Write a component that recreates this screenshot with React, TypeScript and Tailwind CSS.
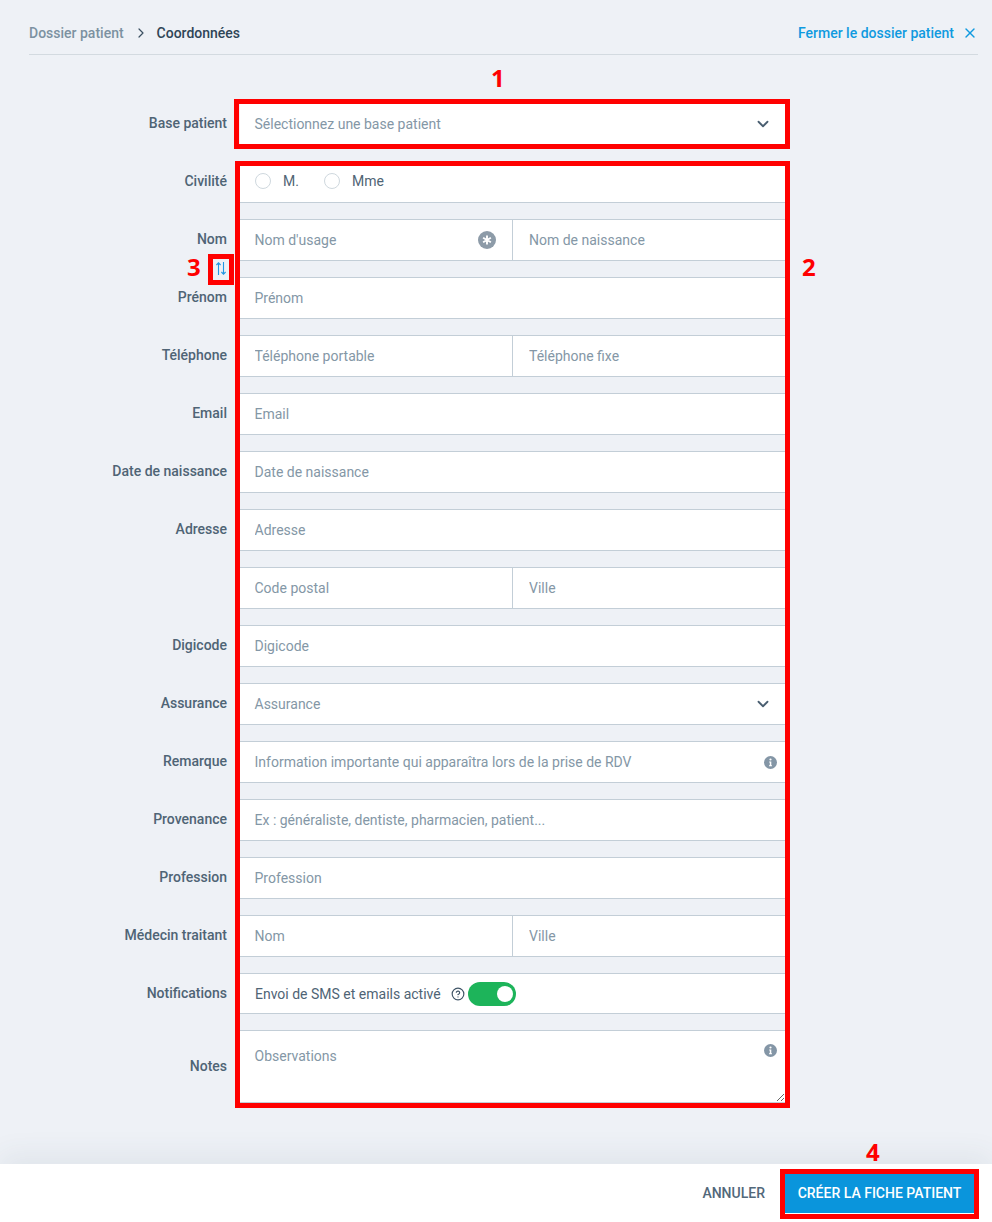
import type { ReactNode } from "react";
import { ChevronDown, ChevronRight, CircleHelp, X } from "lucide-react";

function InfoIcon({ className }: { className: string }) {
  return (
    <svg viewBox="0 0 13 13" className={className}>
      <circle cx="6.5" cy="6.5" r="6.5" fill="#8496a6" />
      <circle cx="6.5" cy="3.5" r="1.1" fill="#fff" />
      <path d="M5.2 5.6h2.1v3.6h.7v1H5v-1h.8V6.6h-.6z" fill="#fff" />
    </svg>
  );
}

function RequiredIcon() {
  return (
    <svg viewBox="0 0 18 18" className="h-[18px] w-[18px] shrink-0">
      <circle cx="9" cy="9" r="9" fill="#8d9ba8" />
      <path d="M9 4.5v9M5.1 6.75l7.8 4.5M12.9 6.75l-7.8 4.5" stroke="#fff" strokeWidth="1.9" />
    </svg>
  );
}

function SwapIcon() {
  return (
    <svg viewBox="0 0 10 13" fill="none" stroke="#2196e3" strokeWidth="1.1" className="h-[13px] w-[10px]">
      <path d="M2.5 13V.8M.4 3 2.5.8 4.6 3M7.5 0v12.2M5.4 10l2.1 2.2L9.6 10" />
    </svg>
  );
}

function Field({ placeholder }: { placeholder: string }) {
  return (
    <input
      placeholder={placeholder}
      className="h-full w-full min-w-0 bg-transparent pl-[14.5px] text-sm outline-none placeholder:text-[#8497a6]"
    />
  );
}

function Label({ children }: { children?: ReactNode }) {
  return <div className="mr-[13px] w-[227px] pb-[2px] text-right text-sm font-medium text-[#4f6475]">{children}</div>;
}

function Row({ label, children, short }: { label?: string; children: ReactNode; short?: boolean }) {
  return (
    <div className="flex items-center">
      <Label>{label}</Label>
      <div className={`flex w-[545px] items-center border-y border-[#c3ced7] bg-white ${short ? "h-[41px]" : "h-[42px]"}`}>
        {children}
      </div>
    </div>
  );
}

function SplitRow({ label, left, right, icon }: { label?: string; left: string; right: string; icon?: ReactNode }) {
  return (
    <Row label={label}>
      <div className="flex h-full w-[272px] items-center pr-[16px]">
        <Field placeholder={left} />
        {icon}
      </div>
      <div className="h-full flex-1 border-l border-[#c3ced7] pl-[1.5px]">
        <Field placeholder={right} />
      </div>
    </Row>
  );
}

function SelectRow({ label, placeholder }: { label: string; placeholder: string }) {
  return (
    <Row label={label}>
      <span className="flex-1 pl-[14.5px] text-sm text-[#8497a6]">{placeholder}</span>
      <ChevronDown size={18} strokeWidth={2.4} className="mr-[13px] text-[#4a5f71]" />
    </Row>
  );
}

function Radio({ label }: { label: string }) {
  return (
    <label className="flex items-center gap-[12px] text-sm text-[#4f6475]">
      <span className="h-4 w-4 rounded-full border border-[#cfd8de] bg-white" />
      {label}
    </label>
  );
}

// red annotation frames and numbers drawn over the form
function Frame({ className }: { className: string }) {
  return <div className={`pointer-events-none absolute border-[5px] border-[#ff0000] ${className}`} />;
}

function Mark({ className, children }: { className: string; children: ReactNode }) {
  return (
    <span className={`absolute font-['Open_Sans',sans-serif] text-2xl leading-none font-bold text-[#ff0000] ${className}`}>
      {children}
    </span>
  );
}

export default function App() {
  return (
    <div className="relative flex h-[1222px] flex-col overflow-hidden bg-[#eef1f6] font-['Roboto',sans-serif]">
      {/* Header */}
      <header className="mx-[29px] flex h-[55px] w-[949px] items-center justify-between border-b border-[#d3dae0] pt-[11px] text-sm font-medium">
        <div className="flex items-center">
          <span className="text-[#7c91a1]">Dossier patient</span>
          <ChevronRight size={16} strokeWidth={1.8} className="mr-[8px] ml-[9px] text-[#3c5062]" />
          <span className="text-[#2f4557]">Coordonnées</span>
        </div>
        <div className="flex items-center text-[#0f9ae0]">
          <span>Fermer le dossier patient</span>
          <X size={16} strokeWidth={2} className="mr-0 ml-[8px]" />
        </div>
      </header>

      {/* Form */}
      <main className="mt-[48px] flex flex-1 flex-col gap-4">
        <SelectRow label="Base patient" placeholder="Sélectionnez une base patient" />
        <Row label="Civilité">
          <div className="flex items-center gap-[25px] pb-[2px] pl-[15px]">
            <Radio label="M." />
            <Radio label="Mme" />
          </div>
        </Row>
        <SplitRow label="Nom" left="Nom d'usage" right="Nom de naissance" icon={<RequiredIcon />} />
        <Row label="Prénom"><Field placeholder="Prénom" /></Row>
        <SplitRow label="Téléphone" left="Téléphone portable" right="Téléphone fixe" />
        <Row label="Email"><Field placeholder="Email" /></Row>
        <Row label="Date de naissance"><Field placeholder="Date de naissance" /></Row>
        <Row label="Adresse"><Field placeholder="Adresse" /></Row>
        <SplitRow left="Code postal" right="Ville" />
        <Row label="Digicode"><Field placeholder="Digicode" /></Row>
        <SelectRow label="Assurance" placeholder="Assurance" />
        <Row label="Remarque">
          <Field placeholder="Information importante qui apparaîtra lors de la prise de RDV" />
          <InfoIcon className="mr-[8px] h-[13px] w-[13px] shrink-0" />
        </Row>
        <Row label="Provenance"><Field placeholder="Ex : généraliste, dentiste, pharmacien, patient..." /></Row>
        <Row label="Profession"><Field placeholder="Profession" /></Row>
        <SplitRow label="Médecin traitant" left="Nom" right="Ville" />
        <Row label="Notifications" short>
          <span className="pl-[15px] text-sm text-[#4f6475]">Envoi de SMS et emails activé</span>
          <CircleHelp size={14} strokeWidth={2} className="mt-[1px] mr-[3px] ml-[10px] text-[#3f5466]" />
          <div className="mt-[1px] flex h-6 w-12 items-center justify-end rounded-full bg-[#1db45a] pr-[3px]">
            <div className="h-4 w-4 rounded-full bg-white" />
          </div>
        </Row>
        <div className="flex items-center">
          <Label>Notes</Label>
          <div className="relative w-[545px]">
            <textarea
              placeholder="Observations"
              className="block h-[73px] w-full resize border-y border-[#c3ced7] bg-white py-[15px] pl-[14.5px] text-sm outline-none placeholder:text-[#8497a6]"
            />
            <InfoIcon className="absolute top-[14px] right-[8px] h-[13px] w-[13px]" />
          </div>
        </div>
      </main>

      {/* Footer */}
      <footer className="flex h-[58px] items-center justify-end bg-white pr-[18px] shadow-[0_-10px_28px_rgba(60,80,100,0.07)]">
        <button className="mr-[20px] text-sm font-medium text-[#52687a]">ANNULER</button>
        <button className="h-10 w-[189px] bg-[#0a95dc] text-sm font-medium text-white">CRÉER LA FICHE PATIENT</button>
      </footer>

      {/* Annotations */}
      <Frame className="top-[99px] left-[234px] h-[50px] w-[556px]" />
      <Frame className="top-[161px] left-[235px] h-[947px] w-[555px]" />
      <Frame className="top-[254px] left-[208px] h-[31px] w-[26px]" />
      <Frame className="top-[1169px] left-[780px] h-[50px] w-[199px]" />
      <div className="absolute top-[262px] left-[216px]"><SwapIcon /></div>
      <Mark className="top-[66px] left-[491px]">1</Mark>
      <Mark className="top-[255px] left-[802px]">2</Mark>
      <Mark className="top-[255px] left-[187px]">3</Mark>
      <Mark className="top-[1140px] left-[866px]">4</Mark>
    </div>
  );
}
